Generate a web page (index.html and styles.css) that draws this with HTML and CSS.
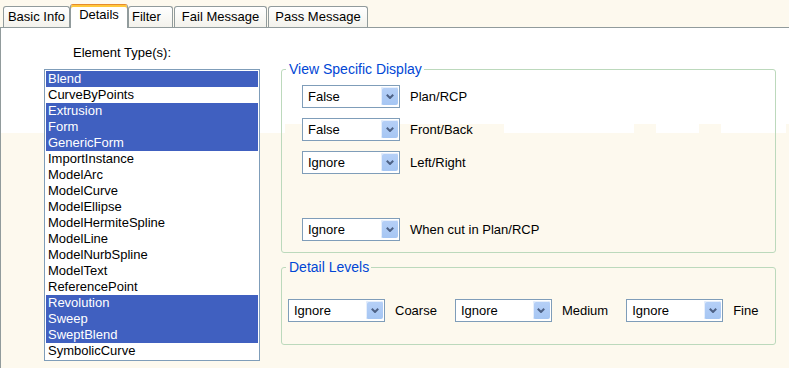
FILE: index.html
```html
<!DOCTYPE html>
<html lang="en">
<head>
    <meta charset="UTF-8">
    <title>Details</title>
    <link rel="stylesheet" href="styles.css">
</head>
<body>
    <div class="tabbar">
        <div class="tab tab-basic">Basic Info</div>
        <div class="tab tab-details active">Details</div>
        <div class="tab tab-filter">Filter</div>
        <div class="tab tab-fail">Fail Message</div>
        <div class="tab tab-pass">Pass Message</div>
    </div>

    <div class="page">
        <div class="types">
            <div class="types-label">Element Type(s):</div>
            <ul class="listbox">
                <li class="selected">Blend</li>
                <li>CurveByPoints</li>
                <li class="selected">Extrusion</li>
                <li class="selected">Form</li>
                <li class="selected">GenericForm</li>
                <li>ImportInstance</li>
                <li>ModelArc</li>
                <li>ModelCurve</li>
                <li>ModelEllipse</li>
                <li>ModelHermiteSpline</li>
                <li>ModelLine</li>
                <li>ModelNurbSpline</li>
                <li>ModelText</li>
                <li>ReferencePoint</li>
                <li class="selected">Revolution</li>
                <li class="selected">Sweep</li>
                <li class="selected">SweptBlend</li>
                <li>SymbolicCurve</li>
            </ul>
        </div>

        <div class="groups">
            <fieldset class="group view">
                <legend>View Specific Display</legend>
                <div class="row">
                    <div class="combo"><span class="value">False</span><span class="drop"><svg width="8" height="5" viewBox="0 0 8 5"><polyline points="0.8,0.8 4,4 7.2,0.8"/></svg></span></div>
                    <span class="caption">Plan/RCP</span>
                </div>
                <div class="row">
                    <div class="combo"><span class="value">False</span><span class="drop"><svg width="8" height="5" viewBox="0 0 8 5"><polyline points="0.8,0.8 4,4 7.2,0.8"/></svg></span></div>
                    <span class="caption">Front/Back</span>
                </div>
                <div class="row">
                    <div class="combo"><span class="value">Ignore</span><span class="drop"><svg width="8" height="5" viewBox="0 0 8 5"><polyline points="0.8,0.8 4,4 7.2,0.8"/></svg></span></div>
                    <span class="caption">Left/Right</span>
                </div>
                <div class="row row-cut">
                    <div class="combo"><span class="value">Ignore</span><span class="drop"><svg width="8" height="5" viewBox="0 0 8 5"><polyline points="0.8,0.8 4,4 7.2,0.8"/></svg></span></div>
                    <span class="caption">When cut in Plan/RCP</span>
                </div>
            </fieldset>

            <fieldset class="group levels">
                <legend>Detail Levels</legend>
                <div class="level-row">
                    <div class="level">
                        <div class="combo small"><span class="value">Ignore</span><span class="drop"><svg width="8" height="5" viewBox="0 0 8 5"><polyline points="0.8,0.8 4,4 7.2,0.8"/></svg></span></div>
                        <span class="caption">Coarse</span>
                    </div>
                    <div class="level">
                        <div class="combo small"><span class="value">Ignore</span><span class="drop"><svg width="8" height="5" viewBox="0 0 8 5"><polyline points="0.8,0.8 4,4 7.2,0.8"/></svg></span></div>
                        <span class="caption">Medium</span>
                    </div>
                    <div class="level">
                        <div class="combo small"><span class="value">Ignore</span><span class="drop"><svg width="8" height="5" viewBox="0 0 8 5"><polyline points="0.8,0.8 4,4 7.2,0.8"/></svg></span></div>
                        <span class="caption">Fine</span>
                    </div>
                </div>
            </fieldset>
        </div>
    </div>
</body>
</html>
```

FILE: styles.css
```css
body {
    margin: 0;
    width: 789px;
    height: 368px;
    overflow: hidden;
    font-family: "Liberation Sans", Arial, sans-serif;
    font-size: 13px;
    color: #000;
    background-color: #fdf9ee;
}

/* tab strip */
.tabbar {
    display: flex;
    align-items: flex-end;
    height: 27px;
    padding-left: 3px;
    border-bottom: 1px solid #919b9c;
}
.tab {
    box-sizing: border-box;
    height: 21px;
    padding-top: 2px;
    line-height: 15px;
    text-align: center;
    border: 1px solid #919b9c;
    border-bottom: none;
    border-radius: 3px 3px 0 0;
    background: linear-gradient(#ffffff, #f3f2ec);
}
.tab.active {
    height: 24px;
    margin-bottom: -1px;
    padding-top: 2px;
    border-top: 1px solid #e68b2c;
    box-shadow: inset 0 2px 0 #ffc83c;
    background: #fff;
}
.tab-basic { width: 67px; }
.tab-details { width: 58px; }
.tab-filter { width: 45px; text-align: left; padding-left: 3px; }
.tab-fail { width: 93px; margin-left: 1px; }
.tab-pass { width: 100px; margin-left: 1px; }

/* tab page */
.page {
    display: flex;
    gap: 21px;
    height: 340px;
    padding: 17px 0 0 43px;
    border-left: 1px solid #919b9c;
    background:
        linear-gradient(#fdf9ee, #fdf9ee) 284px 96px / 219px 9px no-repeat,
        linear-gradient(#fdf9ee, #fdf9ee) 633px 96px / 22px 9px no-repeat,
        linear-gradient(#fdf9ee, #fdf9ee) 698px 96px / 22px 9px no-repeat,
        linear-gradient(#fdf9ee, #fdf9ee) 785px 96px / 10px 9px no-repeat,
        linear-gradient(#ffffff 105px, #fdf9ee 105px);
}

.types {
    width: 216px;
}
.types-label {
    margin: 0 0 9px 29px;
    line-height: 15px;
}
.listbox {
    list-style: none;
    margin: 0;
    padding: 1px;
    border: 1px solid #7f9db9;
    background: #fff;
    font-size: 13px;
}
.listbox li {
    height: 16px;
    line-height: 16px;
    padding-left: 2px;
    white-space: nowrap;
}
.listbox li.selected {
    background: #4060c0;
    color: #fff;
}

/* group boxes */
.groups {
    width: 495px;
    padding-top: 17px;
}
.group {
    margin: 0;
    padding: 8px 0 11px 4px;
    border: 1px solid #bcd9bc;
    border-radius: 3px;
}
.group legend {
    padding: 0 2px 0 3px;
    line-height: 15px;
    font-size: 14px;
    color: #0046d5;
}
.row {
    display: flex;
    align-items: center;
    margin: 0 0 10px 16px;
}
.row:last-child {
    margin-bottom: 0;
}
.row-cut {
    margin-top: 44px;
}
.caption {
    margin-left: 10px;
    white-space: nowrap;
}

.combo {
    box-sizing: border-box;
    display: flex;
    width: 98px;
    height: 23px;
    padding: 1px 1px 2px 0;
    border: 1px solid #7f9db9;
    background: #fff;
}
.combo.small {
    width: 97px;
}
.combo .value {
    flex: 1;
    padding-left: 5px;
    line-height: 19px;
}
.combo .drop {
    display: flex;
    align-items: center;
    justify-content: center;
    width: 17px;
    border-radius: 2px;
    background: linear-gradient(#b6d0f7, #a6c6f3);
    box-shadow: inset 1px 1px 0 #e6effc;
}
.combo .drop svg {
    fill: none;
    stroke: #4d6185;
    stroke-width: 2;
}

.levels {
    margin-top: 7px;
    padding: 24px 0 22px 4px;
}
.level-row {
    display: flex;
    gap: 18px;
    margin-left: 2px;
}
.level {
    display: flex;
    align-items: center;
}
```
